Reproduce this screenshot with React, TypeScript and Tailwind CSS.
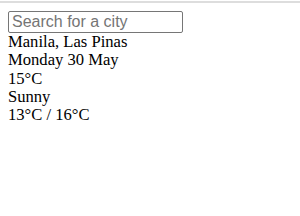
export default function App() {
  return (
    <div className="min-h-[216px] bg-white">
      <div className="h-[1px]" />
      <div className="h-[2px] bg-[#dddddd]" />
      <div className="px-2 pt-2 font-['Liberation_Serif',serif] text-[16.6px] leading-[18.35px] text-black">
        <input
          type="text"
          placeholder="Search for a city"
          className="block w-[175px] h-[22px] px-[3px] border border-[#767676] rounded-[2px] font-['Liberation_Sans',sans-serif] text-[16px] placeholder:text-[#757575] outline-none"
        />
        <div>Manila, Las Pinas</div>
        <div>Monday 30 May</div>
        <div>15°C</div>
        <div>Sunny</div>
        <div>13°C / 16°C</div>
      </div>
    </div>
  );
}
